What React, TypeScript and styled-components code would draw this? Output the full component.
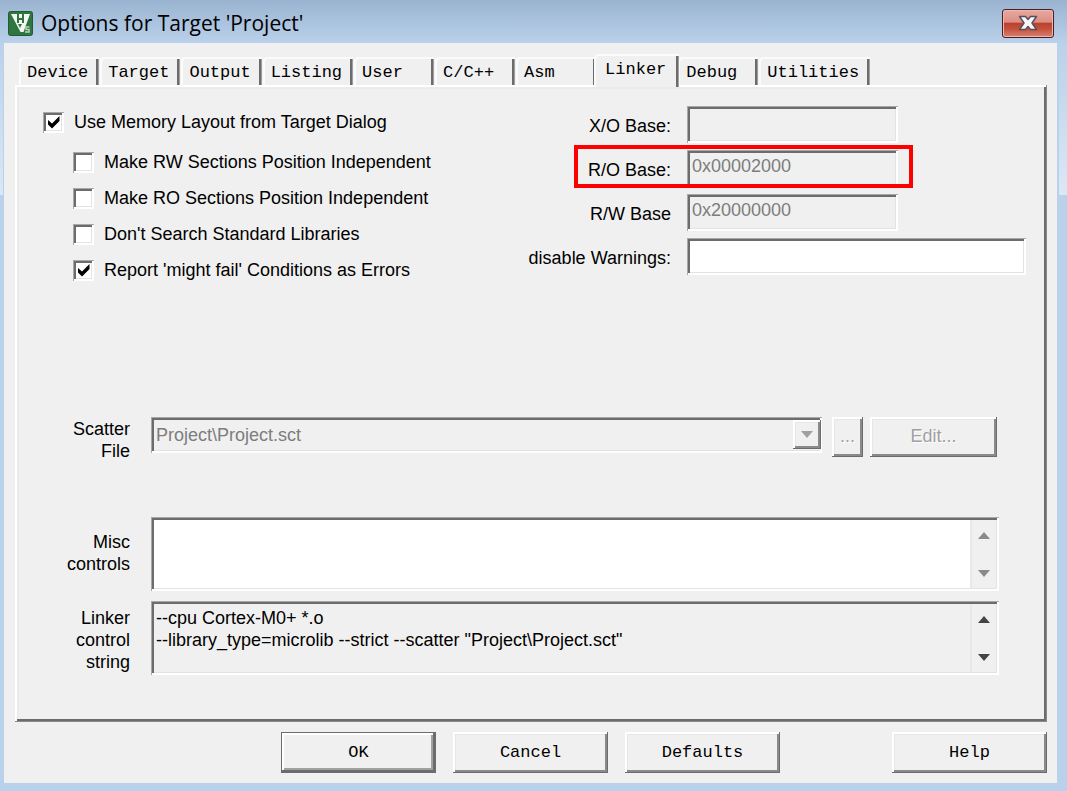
import React, { useState } from 'react';
import styled, { createGlobalStyle, css } from 'styled-components';

const sans = '"Liberation Sans", Arial, sans-serif';
const mono = '"Liberation Mono", "Courier New", monospace';
const face = '#f0f0f0';

const sunken = css`
  box-shadow:
    inset 1px 1px #a8a8a8,
    inset -2px -2px #ffffff,
    inset 3px 3px #6c6c6c,
    inset -3px -3px #e3e3e3;
`;

const raised = css`
  box-shadow:
    inset -1px -1px #6c6c6c,
    inset 2px 2px #ffffff,
    inset -3px -3px #8a8a8a,
    inset 3px 3px #e6e6e6;
`;

const GlobalStyle = createGlobalStyle`
  * { box-sizing: border-box; }
  body { margin: 0; background: #b9d1ea; }
  button, input, select, textarea { font: inherit; color: inherit; margin: 0; border: 0; border-radius: 0; outline: 0; }
`;

const Frame = styled.div`
  min-height: 100vh;
  display: flex;
  flex-direction: column;
  padding: 0 10px 8px 4px;
  background:
    linear-gradient(#b9d1ea, #dbe8f5) right 43px / 8px 152px no-repeat,
    linear-gradient(#b9d1ea, #dbe8f5) left 43px / 3px 152px no-repeat,
    linear-gradient(#9ab3d0 0, #b9d1ea 43px, #b9d1ea 100%);
  color: #000;
  font: 18px/22px ${sans};
`;

const TitleBar = styled.header`
  height: 43px;
  display: flex;
  align-items: center;
  gap: 8px;
  padding: 3px 3px 0 4px;
`;

const Title = styled.h1`
  flex: 1;
  margin: 0;
  font: 400 21px/28px "Open Sans", "Noto Sans", sans-serif;
`;

const CloseButton = styled.button`
  width: 52px;
  height: 29px;
  padding: 0;
  display: grid;
  place-items: center;
  border: 1px solid #4c1c26;
  border-radius: 3px;
  background: linear-gradient(#e7a9a0 0, #dc8d82 46%, #b83f2b 47%, #c4513c 70%, #d88072 100%);
  box-shadow: inset 0 0 0 1px #ecb9b1;
`;

const Body = styled.main`
  flex: 1;
  display: flex;
  flex-direction: column;
  padding: 14px 10px 10px 11px;
  background: ${face};
`;

const TabList = styled.div`
  display: flex;
  gap: 1px;
  padding-left: 4px;
  font: 17px/22px ${mono};
`;

const Tab = styled.button<{ $active: boolean }>`
  height: 28px;
  min-width: 80px;
  padding: 4px 11px 0 8px;
  text-align: left;
  background: ${face};
  border-top-left-radius: 4px;
  box-shadow: inset 2px 2px #fbfbfb, inset -1px 0 #a0a0a0, inset -3px 0 #6c6c6c;
  ${({ $active }) =>
    $active &&
    css`
      position: relative;
      z-index: 1;
      height: 33px;
      margin: -3px -2px -2px -3px;
      padding: 4px 13px 5px 11px;
    `}
`;

const Panel = styled.section`
  flex: 1;
  display: flex;
  flex-direction: column;
  padding: 21px 48px 46px 28px;
  box-shadow:
    inset -1px -1px #8a8a8a,
    inset 2px 2px #ffffff,
    inset -3px -3px #6c6c6c,
    inset 4px 4px #ebebeb;
`;

const TopArea = styled.div`
  display: flex;
  justify-content: space-between;
  margin-right: -27px;
`;

const CheckGroup = styled.fieldset`
  margin: 0;
  padding: 5px 0 0;
  border: 0;
  display: flex;
  flex-direction: column;
`;

const SubChecks = styled.div`
  display: flex;
  flex-direction: column;
  gap: 14px;
  margin: 18px 0 0 30px;
`;

const CheckLabel = styled.label`
  display: flex;
  align-items: center;
  gap: 10px;
`;

const CheckBox = styled.span`
  display: grid;
  width: 21px;
  height: 21px;
  > * {
    grid-area: 1 / 1;
    margin: 0;
    width: 21px;
    height: 21px;
  }
  svg {
    pointer-events: none;
  }
`;

const CheckInput = styled.input`
  appearance: none;
  background: #fff;
  ${sunken}
`;

const Fields = styled.div`
  display: flex;
  flex-direction: column;
  gap: 7px;
`;

const FieldRow = styled.div<{ $marked?: boolean }>`
  position: relative;
  display: grid;
  grid-template-columns: 144px 339px;
  column-gap: 16px;
  ${({ $marked }) =>
    $marked &&
    css`
      &::after {
        content: '';
        position: absolute;
        inset: -5px 113px -1px 47px;
        border: 4px solid #ff0000;
        pointer-events: none;
      }
    `}
`;

const FieldLabel = styled.label`
  padding-top: 9px;
  text-align: right;
`;

const TextBox = styled.input<{ $wide?: boolean }>`
  width: ${({ $wide }) => ($wide ? '339px' : '211px')};
  height: 37px;
  padding: 2px 5px 6px;
  background: #fff;
  ${sunken}
  &:disabled {
    background: ${face};
    color: #7d7d7d;
  }
`;

const FormRow = styled.div<{ $gap: number }>`
  display: flex;
  margin-top: ${({ $gap }) => $gap}px;
`;

const RowLabel = styled.label<{ $top?: boolean }>`
  width: 87px;
  margin-right: 21px;
  padding-top: ${({ $top }) => ($top ? '1px' : '6px')};
  text-align: right;
  white-space: pre-line;
`;

const MiscLabel = styled(RowLabel)`
  padding-top: 14px;
`;

const Combo = styled.div`
  flex: 1;
  display: grid;
  height: 36px;
  padding: 3px 1px 3px 3px;
  ${sunken}
  > * {
    grid-area: 1 / 1;
  }
`;

const ComboSelect = styled.select`
  appearance: none;
  width: 100%;
  padding: 0 32px 0 2px;
  background: ${face};
  color: #7d7d7d;
  opacity: 1;
`;

const ComboArrow = styled.span`
  justify-self: end;
  width: 28px;
  height: 29px;
  display: grid;
  place-items: center;
  background: ${face};
  pointer-events: none;
  ${raised}
`;

const SmallButton = styled.button<{ $width: number }>`
  width: ${({ $width }) => $width}px;
  height: 40px;
  padding: 0 0 3px;
  background: ${face};
  color: #a0a0a0;
  text-shadow: 1px 1px #fff;
  ${raised}
`;

const ScatterButtons = styled.div`
  display: flex;
  gap: 7px;
  margin: 0 2px 0 10px;
`;

const AreaBox = styled.div<{ $readOnly?: boolean }>`
  flex: 1;
  display: flex;
  height: 74px;
  padding: 3px;
  background: ${({ $readOnly }) => ($readOnly ? face : '#fff')};
  ${sunken}
`;

const Area = styled.textarea`
  flex: 1;
  padding: 3px 2px;
  resize: none;
  overflow: hidden;
  background: transparent;
`;

const ScrollBar = styled.div`
  width: 26px;
  display: flex;
  flex-direction: column;
  justify-content: space-between;
  background: ${face};
  border-left: 2px solid #e8e8e8;
`;

const ScrollButton = styled.button<{ $down?: boolean }>`
  height: 30px;
  padding: 0;
  display: grid;
  place-items: center;
  background: transparent;
  svg {
    transform: ${({ $down }) => ($down ? 'rotate(180deg)' : 'none')};
  }
`;

const ButtonBar = styled.footer`
  display: flex;
  justify-content: flex-end;
  gap: 17px;
  margin-top: 10px;
  font: 17px/22px ${mono};
`;

const DialogButton = styled.button<{ $primary?: boolean; $apart?: boolean }>`
  width: 155px;
  height: 41px;
  padding: 0;
  margin-left: ${({ $apart }) => ($apart ? '95px' : '0')};
  background: ${face};
  ${raised}
  ${({ $primary }) =>
    $primary &&
    css`
      box-shadow:
        inset 0 0 0 1px #6c6c6c,
        inset -3px -3px #6c6c6c,
        inset 3px 3px #ffffff,
        inset -5px -5px #a0a0a0;
    `}
`;

const AppIcon = () => (
  <svg width="25" height="25" viewBox="0 0 25 25" aria-hidden="true">
    <rect x="0.5" y="0.5" width="24" height="24" rx="2" fill="#2f7540" stroke="#235b33" />
    <path d="M3 3h19l-6.500 18h-3z" fill="#f4f8f4" />
    <path d="M9 3h2v4h3V3h2v9h-2V9h-3v3H9z" fill="#2f7540" />
    <path d="M10 13l2 4 2-4z" fill="#2f7540" />
    <path d="M21.500 16h-3.500v2.500h3V21h-4" fill="none" stroke="#b9d4be" strokeWidth="1.500" />
  </svg>
);

const Arrow = ({ color }: { color: string }) => (
  <svg width="12" height="7" viewBox="0 0 12 7" aria-hidden="true">
    <path d="M0 7L6 0l6 7z" fill={color} />
  </svg>
);

interface CheckProps {
  id: string;
  label: string;
  initial?: boolean;
}

function Check({ id, label, initial = false }: CheckProps) {
  const [checked, setChecked] = useState(initial);
  return (
    <CheckLabel htmlFor={id}>
      <CheckBox>
        <CheckInput id={id} type="checkbox" checked={checked} onChange={() => setChecked(!checked)} />
        {checked && (
          <svg viewBox="0 0 21 21" aria-hidden="true">
            <path d="M5 8l4 3.500L16.500 4v5L9 16.500 5 12.500z" fill="#000" />
          </svg>
        )}
      </CheckBox>
      {label}
    </CheckLabel>
  );
}

function Scroll({ color }: { color: string }) {
  return (
    <ScrollBar>
      <ScrollButton type="button" aria-label="Scroll up">
        <Arrow color={color} />
      </ScrollButton>
      <ScrollButton type="button" aria-label="Scroll down" $down>
        <Arrow color={color} />
      </ScrollButton>
    </ScrollBar>
  );
}

const tabs = ['Device', 'Target', 'Output', 'Listing', 'User', 'C/C++', 'Asm', 'Linker', 'Debug', 'Utilities'];

export default function App() {
  const [active, setActive] = useState('Linker');
  return (
    <>
      <GlobalStyle />
      <Frame>
        <TitleBar>
          <AppIcon />
          <Title>Options for Target 'Project'</Title>
          <CloseButton type="button" aria-label="Close">
            <svg width="20" height="16" viewBox="0 0 20 16" aria-hidden="true">
              <path
                d="M1.500 1.500h6l2.500 3 2.500-3h6L14 8l4.500 6.500h-6l-2.500-3-2.500 3h-6L6 8z"
                fill="#f6f6f6"
                stroke="#56505c"
                strokeWidth="1.500"
                strokeLinejoin="round"
              />
            </svg>
          </CloseButton>
        </TitleBar>
        <Body>
          <TabList role="tablist">
            {tabs.map((name) => (
              <Tab
                key={name}
                type="button"
                role="tab"
                aria-selected={name === active}
                $active={name === active}
                onClick={() => setActive(name)}
              >
                {name}
              </Tab>
            ))}
          </TabList>
          <Panel role="tabpanel">
            <TopArea>
              <CheckGroup>
                <Check id="memory" label="Use Memory Layout from Target Dialog" initial />
                <SubChecks>
                  <Check id="rw" label="Make RW Sections Position Independent" />
                  <Check id="ro" label="Make RO Sections Position Independent" />
                  <Check id="libs" label="Don't Search Standard Libraries" />
                  <Check id="fail" label="Report 'might fail' Conditions as Errors" initial />
                </SubChecks>
              </CheckGroup>
              <Fields>
                <FieldRow>
                  <FieldLabel htmlFor="xo-base">X/O Base:</FieldLabel>
                  <TextBox id="xo-base" disabled />
                </FieldRow>
                <FieldRow $marked>
                  <FieldLabel htmlFor="ro-base">R/O Base:</FieldLabel>
                  <TextBox id="ro-base" defaultValue="0x00002000" disabled />
                </FieldRow>
                <FieldRow>
                  <FieldLabel htmlFor="rw-base">R/W Base</FieldLabel>
                  <TextBox id="rw-base" defaultValue="0x20000000" disabled />
                </FieldRow>
                <FieldRow>
                  <FieldLabel htmlFor="warnings">disable Warnings:</FieldLabel>
                  <TextBox id="warnings" $wide />
                </FieldRow>
              </Fields>
            </TopArea>
            <FormRow $gap={136}>
              <RowLabel htmlFor="scatter" $top>{'Scatter\nFile'}</RowLabel>
              <Combo>
                <ComboSelect id="scatter" disabled>
                  <option>Project\Project.sct</option>
                </ComboSelect>
                <ComboArrow>
                  <svg width="12" height="7" viewBox="0 0 12 7" aria-hidden="true">
                    <path d="M0 0h12L6 7z" fill="#a0a0a0" />
                  </svg>
                </ComboArrow>
              </Combo>
              <ScatterButtons>
                <SmallButton type="button" $width={31} disabled>
                  ...
                </SmallButton>
                <SmallButton type="button" $width={127} disabled>
                  Edit...
                </SmallButton>
              </ScatterButtons>
            </FormRow>
            <FormRow $gap={55}>
              <MiscLabel htmlFor="misc">{'Misc\ncontrols'}</MiscLabel>
              <AreaBox>
                <Area id="misc" />
                <Scroll color="#8a8a8a" />
              </AreaBox>
            </FormRow>
            <FormRow $gap={10}>
              <RowLabel htmlFor="control">{'Linker\ncontrol\nstring'}</RowLabel>
              <AreaBox $readOnly>
                <Area
                  id="control"
                  readOnly
                  value={'--cpu Cortex-M0+ *.o\n--library_type=microlib --strict --scatter "Project\\Project.sct"'}
                />
                <Scroll color="#444" />
              </AreaBox>
            </FormRow>
          </Panel>
          <ButtonBar>
            <DialogButton type="button" $primary>OK</DialogButton>
            <DialogButton type="button">Cancel</DialogButton>
            <DialogButton type="button">Defaults</DialogButton>
            <DialogButton type="button" $apart>Help</DialogButton>
          </ButtonBar>
        </Body>
      </Frame>
    </>
  );
}
